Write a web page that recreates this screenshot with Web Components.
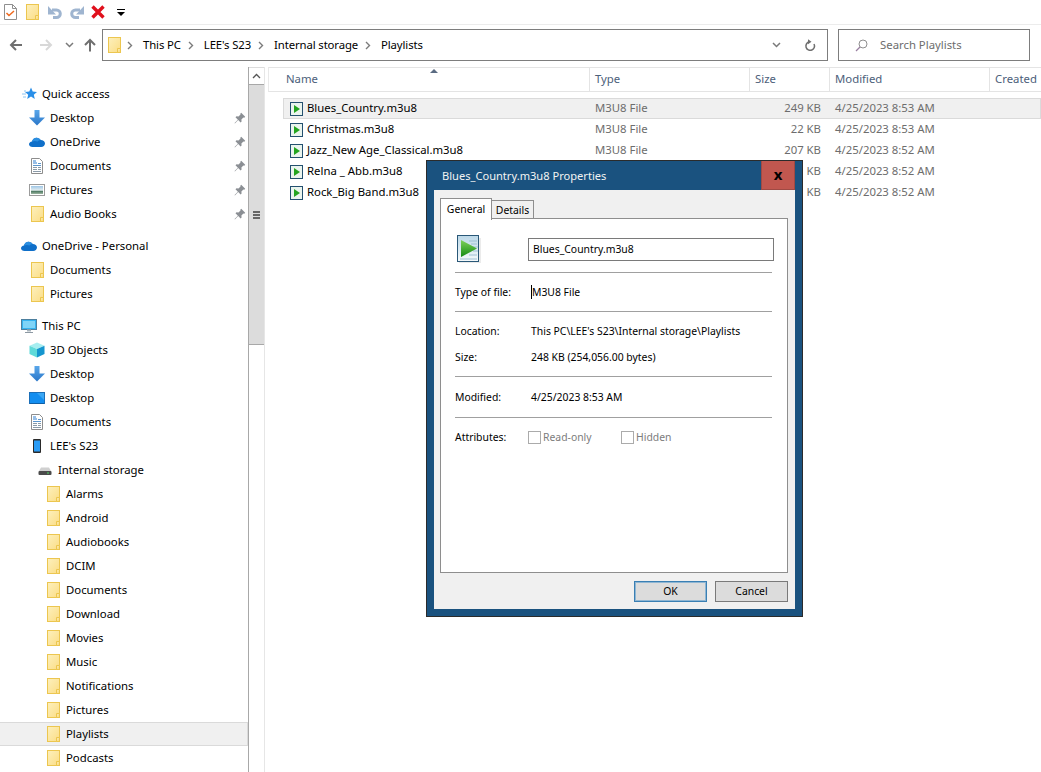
<!DOCTYPE html>
<html lang="en">
<head>
<meta charset="utf-8">
<title>Playlists</title>
<style>
  html, body { margin: 0; height: 100%; overflow: hidden; background: #fff; }
  body { font: 11.35px "Noto Sans", "Open Sans", sans-serif; color: #000; }
</style>
</head>
<body>
<explorer-window>
  <qat-bar slot="top"></qat-bar>
  <address-bar slot="top" crumbs="This PC|LEE's S23|Internal storage|Playlists" search="Search Playlists"></address-bar>

  <nav-pane slot="nav">
    <nav-group>
      <nav-item icon="star">Quick access</nav-item>
      <nav-item icon="download" level="1" pin>Desktop</nav-item>
      <nav-item icon="cloud" level="1" pin>OneDrive</nav-item>
      <nav-item icon="doc" level="1" pin>Documents</nav-item>
      <nav-item icon="picture" level="1" pin>Pictures</nav-item>
      <nav-item icon="folder" level="1" pin>Audio Books</nav-item>
    </nav-group>
    <nav-group>
      <nav-item icon="cloud">OneDrive - Personal</nav-item>
      <nav-item icon="folder" level="1">Documents</nav-item>
      <nav-item icon="folder" level="1">Pictures</nav-item>
    </nav-group>
    <nav-group>
      <nav-item icon="pc">This PC</nav-item>
      <nav-item icon="cube" level="1">3D Objects</nav-item>
      <nav-item icon="download" level="1">Desktop</nav-item>
      <nav-item icon="screen" level="1">Desktop</nav-item>
      <nav-item icon="doc" level="1">Documents</nav-item>
      <nav-item icon="phone" level="1">LEE's S23</nav-item>
      <nav-item icon="drive" level="2">Internal storage</nav-item>
      <nav-item icon="folder" level="3">Alarms</nav-item>
      <nav-item icon="folder" level="3">Android</nav-item>
      <nav-item icon="folder" level="3">Audiobooks</nav-item>
      <nav-item icon="folder" level="3">DCIM</nav-item>
      <nav-item icon="folder" level="3">Documents</nav-item>
      <nav-item icon="folder" level="3">Download</nav-item>
      <nav-item icon="folder" level="3">Movies</nav-item>
      <nav-item icon="folder" level="3">Music</nav-item>
      <nav-item icon="folder" level="3">Notifications</nav-item>
      <nav-item icon="folder" level="3">Pictures</nav-item>
      <nav-item icon="folder" level="3" selected>Playlists</nav-item>
      <nav-item icon="folder" level="3">Podcasts</nav-item>
    </nav-group>
  </nav-pane>
  <nav-scroll slot="nav"></nav-scroll>

  <file-list slot="main">
    <file-row selected type="M3U8 File" size="249 KB" date="4/25/2023 8:53 AM">Blues_Country.m3u8</file-row>
    <file-row type="M3U8 File" size="22 KB" date="4/25/2023 8:53 AM">Christmas.m3u8</file-row>
    <file-row type="M3U8 File" size="207 KB" date="4/25/2023 8:52 AM">Jazz_New Age_Classical.m3u8</file-row>
    <file-row size="KB" date="4/25/2023 8:52 AM">Relna _ Abb.m3u8</file-row>
    <file-row size="KB" date="4/25/2023 8:52 AM">Rock_Big Band.m3u8</file-row>
  </file-list>

  <props-dialog slot="over"></props-dialog>
</explorer-window>

<script>
const ICONS = {
  folder: `<svg width="13" height="16" viewBox="0 0 13 16"><defs><linearGradient id="fg" x1="0" y1="0" x2="1" y2="1"><stop offset="0" stop-color="#fdf0bd"/><stop offset="1" stop-color="#fbdd85"/></linearGradient></defs><rect x=".5" y=".5" width="12" height="15" fill="url(#fg)" stroke="#ecc64f"/><path d="M9.5 15.5v-4h3" fill="#fbe6a2" stroke="#ecc64f"/></svg>`,
  star: `<svg width="16" height="16" viewBox="0 0 16 16"><path d="M10 1.500l1.700 4 4.300.4-3.200 2.800 1 4.200-3.800-2.300-3.800 2.300 1-4.200L4 5.900l4.300-.4z" fill="#2a8fe8"/><path d="M1 8h4M2 11h3M3 5h2" stroke="#8cc4f2" stroke-width="1"/></svg>`,
  download: `<svg width="16" height="16" viewBox="0 0 16 16"><defs><linearGradient id="dl" x1="0" y1="0" x2="0" y2="1"><stop offset="0" stop-color="#5aa7ea"/><stop offset="1" stop-color="#2a76c8"/></linearGradient></defs><path d="M5.500 0h5v7.500H16L8 15.500 0 7.500h5.500z" fill="url(#dl)"/></svg>`,
  cloud: `<svg width="16" height="16" viewBox="0 0 16 16"><path d="M3.500 13C1.500 13 0 11.800 0 10.200 0 8.700 1.300 7.500 3 7.400 3.500 5.300 5.400 3.800 7.600 3.800c1.700 0 3.200.9 4 2.300 2.300-.1 4.400 1.400 4.400 3.500 0 1.900-1.700 3.400-3.800 3.400z" fill="#0f6fc9"/><path d="M3 7.400C3.500 5.300 5.400 3.800 7.600 3.800c1.700 0 3.200.9 4 2.300-1.400.1-2.300.7-3 1.500-1.500-.9-3.700-.9-5.600-.2z" fill="#2b8ee0"/></svg>`,
  doc: `<svg width="16" height="16" viewBox="0 0 16 16"><path d="M2.500.5h8l3 3v12h-11z" fill="#fff" stroke="#8d8d8d"/><path d="M4 3h3M4 5h4" stroke="#2f7fd0"/><path d="M9 5.500h3M4 7.500h8" stroke="#5b95cc"/><path d="M4 9.500h4M9 9.500h3M4 11.500h4M9 11.500h3M4 13.500h8" stroke="#8a9aa8"/></svg>`,
  picture: `<svg width="16" height="16" viewBox="0 0 16 16"><defs><linearGradient id="pc" x1="0" y1="0" x2="0" y2="1"><stop offset="0" stop-color="#9dc6e6"/><stop offset=".55" stop-color="#e6eef0"/><stop offset=".6" stop-color="#3e6f58"/><stop offset="1" stop-color="#9db5a0"/></linearGradient></defs><rect x=".5" y="2.500" width="15" height="11" fill="#fff" stroke="#9b9b9b"/><rect x="2" y="4" width="12" height="8" fill="url(#pc)"/></svg>`,
  pc: `<svg width="16" height="16" viewBox="0 0 16 16"><rect x=".5" y="1.500" width="15" height="10" fill="#35b3f0" stroke="#4d7f9e"/><rect x="2" y="3" width="12" height="7" fill="#7fd4f7"/><path d="M6 11.500h4v2H6z" fill="#a9b4bc"/><path d="M4 14.500h8" stroke="#8d99a3"/></svg>`,
  screen: `<svg width="16" height="16" viewBox="0 0 16 16"><rect x=".5" y="2.500" width="15" height="11" fill="#138ef0" stroke="#1c6fb8"/><path d="M1 13h14v1H1z" fill="#0f5fa5"/><path d="M8 3h7v7z" fill="#3aa7f5"/></svg>`,
  cube: `<svg width="16" height="16" viewBox="0 0 16 16"><path d="M8 .5l7.500 3.200L8 7 .5 3.700z" fill="#a6eef0"/><path d="M.5 3.700L8 7v8.500L.5 12z" fill="#5fdad9"/><path d="M15.500 3.700L8 7v8.500l7.500-3.500z" fill="#1596cf"/></svg>`,
  phone: `<svg width="16" height="16" viewBox="0 0 16 16"><rect x="4" y="1" width="8" height="14" rx="1" fill="#2a2a2a"/><rect x="5" y="2.500" width="6" height="11" fill="#2a9cf5"/></svg>`,
  drive: `<svg width="16" height="16" viewBox="0 0 16 16"><path d="M2 9l2-3.500h8L14 9z" fill="#d0d0d0"/><rect x="1.500" y="9" width="13" height="4" rx="1" fill="#4a4a4a"/><rect x="10" y="10.500" width="2" height="1" fill="#4cd964"/></svg>`,
  pin: `<svg width="12" height="12" viewBox="0 0 12 12"><path d="M7.200.8l4 4-.9.9-.9-.2-2 2 .2 2-1 1-2.400-2.400L.9 11.400l-.3-.3 3.300-3.400L1.500 5.300l1-1 2 .2 2-2-.2-.8z" fill="#8b8f94"/></svg>`,
  file: `<svg width="13" height="14" viewBox="0 0 13 14"><rect x=".5" y=".5" width="12" height="13" fill="#eaf4ee" stroke="#23506f"/><path d="M4 3l6 4-6 4z" fill="#23a51f"/></svg>`,
  back: `<svg width="14" height="14" viewBox="0 0 14 14"><path d="M13 7H2M7 2L2 7l5 5" fill="none" stroke="currentColor" stroke-width="2"/></svg>`,
  forward: `<svg width="14" height="14" viewBox="0 0 14 14"><path d="M1 7h11M7 2l5 5-5 5" fill="none" stroke="currentColor" stroke-width="2"/></svg>`,
  up: `<svg width="14" height="14" viewBox="0 0 14 14"><path d="M7 13.500V2M2 7l5-5 5 5" fill="none" stroke="currentColor" stroke-width="2"/></svg>`,
  chevDown: `<svg width="9" height="6" viewBox="0 0 9 6"><path d="M1 1l3.500 3.500L8 1" fill="none" stroke="currentColor" stroke-width="1.500"/></svg>`,
  chevRight: `<svg width="6" height="9" viewBox="0 0 6 9"><path d="M1 1l3.500 3.500L1 8" fill="none" stroke="#7b7b7b" stroke-width="1.400"/></svg>`,
  refresh: `<svg width="12" height="13" viewBox="0 0 12 13"><path d="M5.500 2.800a4.300 4.300 0 1 0 4.500 2.200" fill="none" stroke="#6f6f6f" stroke-width="1.500"/><path d="M4 .3l3.500 2.500L4 5.300z" fill="#6f6f6f"/></svg>`,
  search: `<svg width="13" height="13" viewBox="0 0 13 13"><circle cx="8" cy="5" r="4" fill="none" stroke="#8f8f8f"/><path d="M5 8l-4 4" stroke="#9a7fa0" stroke-width="1.200"/></svg>`
};

class ExplorerWindow extends HTMLElement {
  connectedCallback() {
    this.attachShadow({ mode: "open" });
    this.shadowRoot.innerHTML = `
      <style>
        :host { display: flex; flex-direction: column; height: 100vh; position: relative; overflow: hidden; }
        .body { flex: 1; display: flex; min-height: 0; }
        .nav { display: flex; flex: none; }
        .main { flex: 1; min-width: 0; margin-left: 3px; }
      </style>
      <slot name="top"></slot>
      <div class="body">
        <div class="nav"><slot name="nav"></slot></div>
        <div class="main"><slot name="main"></slot></div>
      </div>
      <slot name="over"></slot>
    `;
  }
}

class QatBar extends HTMLElement {
  connectedCallback() {
    this.attachShadow({ mode: "open" });
    this.shadowRoot.innerHTML = `
      <style>
        :host { display: flex; align-items: center; height: 24px; box-sizing: content-box; border-bottom: 1px solid #ececec; padding-left: 4px; }
        svg { display: block; flex: none; }
      </style>
      <svg width="13" height="16" viewBox="0 0 13 16" style="margin-right:9px"><path d="M.5.500h8l4 4v11H.5z" fill="#fff" stroke="#8f8f8f"/><path d="M8.500.500v4h4" fill="none" stroke="#8f8f8f"/><path d="M2.500 9l2.500 2.500L10 7" fill="none" stroke="#ef6a1f" stroke-width="1.500"/></svg>
      ${ICONS.folder}
      <svg width="15" height="15" viewBox="0 0 15 15" style="margin-left:8px"><path d="M5 5h4.500a3.800 3.800 0 0 1 0 7.600H6" fill="none" stroke="#9fb5d0" stroke-width="3"/><path d="M1 1v8.500h8z" fill="#9fb5d0"/></svg>
      <svg width="15" height="15" viewBox="0 0 15 15" style="margin-left:8px"><path d="M10 5H5.500a3.800 3.800 0 0 0 0 7.600H9" fill="none" stroke="#9fb5d0" stroke-width="3"/><path d="M14 1v8.500H6z" fill="#9fb5d0"/></svg>
      <svg width="14" height="14" viewBox="0 0 14 14" style="margin-left:6px"><path d="M1.500 1.500l11 11M12.500 1.500l-11 11" stroke="#e0101c" stroke-width="3.400"/></svg>
      <svg width="8" height="7" viewBox="0 0 8 7" style="margin-left:12px"><path d="M0 .5h8" stroke="#000"/><path d="M0 3h8L4 7z" fill="#000"/></svg>
    `;
  }
}

class AddressBar extends HTMLElement {
  connectedCallback() {
    const crumbs = this.getAttribute("crumbs").split("|");
    this.attachShadow({ mode: "open" });
    this.shadowRoot.innerHTML = `
      <style>
        :host { display: flex; align-items: flex-start; height: 43px; padding: 4px 11px 0 9px; box-sizing: border-box; gap: 10px; }
        .nav { display: flex; align-items: center; height: 32px; flex: none; width: 87px; margin-right: -4px; }
        .nav > * { flex: none; display: flex; }
        .box { height: 32px; box-sizing: border-box; border: 1px solid #7d7d7d; display: flex; align-items: center; }
        .path { flex: 1; min-width: 0; padding: 0 11px 0 5px; letter-spacing: -.12px; }
        .crumb { display: flex; align-items: center; padding-bottom: 2px; }
        .sep { display: flex; margin: 0 10px 0 7px; }
        .first { margin: 0 10px 0 6px; display: flex; }
        .right { margin-left: auto; display: flex; align-items: center; color: #7a7a7a; }
        .search { width: 192px; flex: none; padding-left: 16px; color: #6d6d6d; gap: 12px; }
        .search span { padding-bottom: 2px; }
      </style>
      <div class="nav">
        <span style="color:#6f6f6f">${ICONS.back}</span>
        <span style="color:#d8d8d8;margin-left:16px">${ICONS.forward}</span>
        <span style="color:#7a7a7a;margin-left:12px">${ICONS.chevDown}</span>
        <span style="color:#6f6f6f;margin-left:9px">${ICONS.up}</span>
      </div>
      <div class="box path">
        ${ICONS.folder}
        <span class="first">${ICONS.chevRight}</span>
        ${crumbs.map((c, i) => `<span class="crumb">${c}</span>${i < crumbs.length - 1 ? `<span class="sep">${ICONS.chevRight}</span>` : ""}`).join("")}
        <span class="right">${ICONS.chevDown}<span style="margin-left:23px;display:flex">${ICONS.refresh}</span></span>
      </div>
      <div class="box search">${ICONS.search}<span>${this.getAttribute("search")}</span></div>
    `;
  }
}

class NavPane extends HTMLElement {
  connectedCallback() {
    this.attachShadow({ mode: "open" });
    this.shadowRoot.innerHTML = `
      <style>
        :host { display: block; width: 248px; flex: none; padding-top: 14px; box-sizing: border-box; }
      </style>
      <slot></slot>
    `;
  }
}

class NavGroup extends HTMLElement {
  connectedCallback() {
    this.attachShadow({ mode: "open" });
    this.shadowRoot.innerHTML = `
      <style>:host { display: block; margin-bottom: 8px; }</style>
      <slot></slot>
    `;
  }
}

class NavItem extends HTMLElement {
  connectedCallback() {
    const level = Number(this.getAttribute("level") || 0);
    this.attachShadow({ mode: "open" });
    this.shadowRoot.innerHTML = `
      <style>
        :host { display: flex; align-items: center; height: 24px; box-sizing: border-box; white-space: nowrap; padding-left: ${21 + level * 8}px; }
        :host([selected]) { background: #f0f0f0; border-top: 1px solid #dadada; border-bottom: 1px solid #dadada; border-right: 1px solid #dadada; }
        .ic { width: 16px; height: 16px; flex: none; display: flex; align-items: center; justify-content: center; margin-right: 5px; }
        .lab { padding-bottom: 2px; }
        .pin { margin-left: auto; margin-right: 2px; display: flex; }
      </style>
      <span class="ic">${ICONS[this.getAttribute("icon")]}</span>
      <span class="lab"><slot></slot></span>
      ${this.hasAttribute("pin") ? `<span class="pin">${ICONS.pin}</span>` : ""}
    `;
  }
}

class NavScroll extends HTMLElement {
  connectedCallback() {
    this.attachShadow({ mode: "open" });
    this.shadowRoot.innerHTML = `
      <style>
        :host { display: flex; flex-direction: column; width: 17px; flex: none; box-sizing: border-box; border-left: 1px solid #a8a8a8; border-right: 1px solid #e6e6e6; margin-top: -1px; height: 705px; }
        .btn { height: 17px; flex: none; display: flex; align-items: center; justify-content: center; color: #555; border-top: 1px solid #dcdcdc; box-sizing: border-box; }
        .thumb { height: 261px; flex: none; background: #dcdcdc; border-top: 1px solid #a8a8a8; border-bottom: 1px solid #a8a8a8; box-sizing: border-box; display: flex; flex-direction: column; align-items: center; justify-content: center; gap: 1px; }
        .thumb i { display: block; width: 7px; height: 2px; background: #666; }
      </style>
      <div class="btn"><svg width="9" height="6" viewBox="0 0 9 6"><path d="M1 5l3.500-3.500L8 5" fill="none" stroke="currentColor" stroke-width="1.300"/></svg></div>
      <div class="thumb"><i></i><i></i><i></i></div>
    `;
  }
}

const COLUMNS = "306px 160px 80px 160px 1fr";

class FileList extends HTMLElement {
  connectedCallback() {
    this.attachShadow({ mode: "open" });
    this.shadowRoot.innerHTML = `
      <style>
        :host { display: block; }
        .head { display: grid; grid-template-columns: 320px 160px 80px 160px 1fr; height: 25px; box-sizing: border-box; border-top: 1px solid #e4e4e4; border-bottom: 1px solid #e4e4e4; border-left: 1px solid #e9e9e9; margin-top: -1px; color: #4c607a; position: relative; }
        .head div { padding: 0 0 3px 5px; display: flex; align-items: center; border-left: 1px solid #e4e4e4; }
        .head div:first-child { padding-left: 17px; border-left: 0; }
        .caret { position: absolute; left: 161px; top: 1px; width: 0; height: 0; border-left: 4px solid transparent; border-right: 4px solid transparent; border-bottom: 4px solid #5a6b82; }
        .rows { padding: 6px 0 0 15px; }
      </style>
      <div class="head">
        <div>Name</div><div>Type</div><div>Size</div><div>Modified</div><div>Created</div>
        <span class="caret"></span>
      </div>
      <div class="rows"><slot></slot></div>
    `;
  }
}

class FileRow extends HTMLElement {
  connectedCallback() {
    this.attachShadow({ mode: "open" });
    this.shadowRoot.innerHTML = `
      <style>
        :host { display: grid; grid-template-columns: ${COLUMNS}; align-items: center; height: 21px; box-sizing: border-box; color: #6d6d6d; white-space: nowrap; }
        :host([selected]) { background: #f0f0f0; outline: 1px solid #dadada; outline-offset: -1px; }
        .name { display: flex; align-items: center; gap: 4px; padding-left: 7px; color: #000; }
        .name svg { display: block; }
        .lab { padding-bottom: 2px; }
        .type { padding: 0 0 2px 6px; }
        .size { text-align: right; padding: 0 8px 2px 0; }
        .date { padding: 0 0 2px 6px; }
      </style>
      <div class="name">${ICONS.file}<span class="lab"><slot></slot></span></div>
      <div class="type">${this.getAttribute("type") || ""}</div>
      <div class="size">${this.getAttribute("size")}</div>
      <div class="date">${this.getAttribute("date")}</div>
    `;
  }
}

class PropsDialog extends HTMLElement {
  connectedCallback() {
    this.attachShadow({ mode: "open" });
    this.shadowRoot.innerHTML = `
      <style>
        :host { position: absolute; left: 426px; top: 160px; width: 377px; height: 457px; box-sizing: border-box; background: #1a527f; border: 1px solid #2b2b2b; display: flex; flex-direction: column; padding: 0 7px 7px; font-size: 10.4px; }
        .title { height: 29px; flex: none; display: flex; align-items: center; color: #f2f2f2; font-size: 11.1px; padding-left: 8px; }
        .close { margin-left: auto; width: 34px; height: 29px; box-sizing: border-box; background: #c1574f; border: 1px solid #9f4a44; border-top: 0; color: #000; font-weight: 700; font-size: 15px; display: flex; align-items: center; justify-content: center; padding-bottom: 3px; }
        .client { flex: 1; background: #f0f0f0; display: flex; flex-direction: column; padding: 8px 7px 7px 6px; min-height: 0; }
        .tabs { display: flex; align-items: flex-end; height: 20px; flex: none; position: relative; }
        .tab { box-sizing: border-box; border: 1px solid #8e8e8e; border-bottom: 0; display: flex; align-items: center; justify-content: center; }
        .tab.on { width: 52px; height: 22px; background: #fff; margin-bottom: -2px; position: relative; z-index: 1; padding-bottom: 2px; }
        .tab.off { width: 43px; height: 18px; margin-left: -1px; background: #f0f0f0; }
        .panel { flex: 1; background: #fff; border: 1px solid #8e8e8e; padding: 16px 15px 0 14px; display: flex; flex-direction: column; min-height: 0; }
        .head { display: grid; grid-template-columns: 73px 1fr; height: 27px; align-items: center; flex: none; margin-bottom: 10px; }
        .fname { margin-right: -2px; height: 23px; box-sizing: border-box; border: 1px solid #7a7a7a; display: flex; align-items: center; padding-left: 4px; }
        hr { height: 1px; border: 0; margin: 0; background: #a0a0a0; flex: none; }
        .sec { display: flex; flex-direction: column; justify-content: center; flex: none; }
        .row { display: grid; grid-template-columns: 76px 1fr; align-items: center; height: 26px; box-sizing: border-box; }
        .caret { border-left: 1px solid #000; }
        .attr { display: flex; align-items: center; height: 26px; box-sizing: border-box; }
        .attr .lab { width: 73px; flex: none; }
        .chk { display: flex; align-items: center; gap: 2px; color: #7c7c7c; }
        .chk i { display: block; width: 13px; height: 13px; box-sizing: border-box; border: 1px solid #ababab; background: #fff; }
        .btns { display: flex; justify-content: flex-end; gap: 8px; height: 21px; margin-top: 8px; flex: none; }
        .btn { width: 73px; box-sizing: border-box; background: #dcdcdc; border: 1px solid #7a7a7a; display: flex; align-items: center; justify-content: center; padding-bottom: 1px; }
        .btn.def { border-color: #3a7fb3; box-shadow: inset 0 0 0 1px #8fb6d3; }
      </style>
      <div class="title">Blues_Country.m3u8 Properties<div class="close">x</div></div>
      <div class="client">
        <div class="tabs"><div class="tab on">General</div><div class="tab off">Details</div></div>
        <div class="panel">
          <div class="head">
            <svg width="24" height="28" viewBox="0 0 24 28" style="margin-left:2px;display:block">
              <defs>
                <linearGradient id="pg" x1="0" y1="0" x2="0" y2="1"><stop offset="0" stop-color="#7fd15a"/><stop offset="1" stop-color="#128a12"/></linearGradient>
                <linearGradient id="pb" x1="0" y1="0" x2="0" y2="1"><stop offset="0" stop-color="#bcd8e8"/><stop offset="1" stop-color="#f6fafb"/></linearGradient>
              </defs>
              <rect x="2" y="3" width="22" height="25" fill="#d8d8d8" opacity=".5"/>
              <rect x=".5" y=".5" width="21" height="26" fill="url(#pb)" stroke="#2a5878"/>
              <path d="M12 6h8M14 9h6M16 12h5M16 16h5M12 20h8M3 24h17" stroke="#9fc0d4"/>
              <path d="M4 5l16 8.500L4 22z" fill="url(#pg)"/>
            </svg>
            <div class="fname">Blues_Country.m3u8</div>
          </div>
          <hr>
          <div class="sec" style="height:38px"><div class="row"><span>Type of file:</span><span class="caret">M3U8 File</span></div></div>
          <hr>
          <div class="sec" style="height:64px">
            <div class="row"><span>Location:</span><span>This PC\\LEE's S23\\Internal storage\\Playlists</span></div>
            <div class="row"><span>Size:</span><span>248 KB (254,056.00 bytes)</span></div>
          </div>
          <hr>
          <div class="sec" style="height:40px"><div class="row"><span>Modified:</span><span>4/25/2023 8:53 AM</span></div></div>
          <hr>
          <div class="sec" style="height:38px">
            <div class="attr">
              <span class="lab">Attributes:</span>
              <span class="chk" style="width:93px"><i></i>Read-only</span>
              <span class="chk"><i></i>Hidden</span>
            </div>
          </div>
        </div>
        <div class="btns"><div class="btn def">OK</div><div class="btn">Cancel</div></div>
      </div>
    `;
  }
}

customElements.define("explorer-window", ExplorerWindow);
customElements.define("qat-bar", QatBar);
customElements.define("address-bar", AddressBar);
customElements.define("nav-pane", NavPane);
customElements.define("nav-group", NavGroup);
customElements.define("nav-item", NavItem);
customElements.define("nav-scroll", NavScroll);
customElements.define("file-list", FileList);
customElements.define("file-row", FileRow);
customElements.define("props-dialog", PropsDialog);
</script>
</body>
</html>
